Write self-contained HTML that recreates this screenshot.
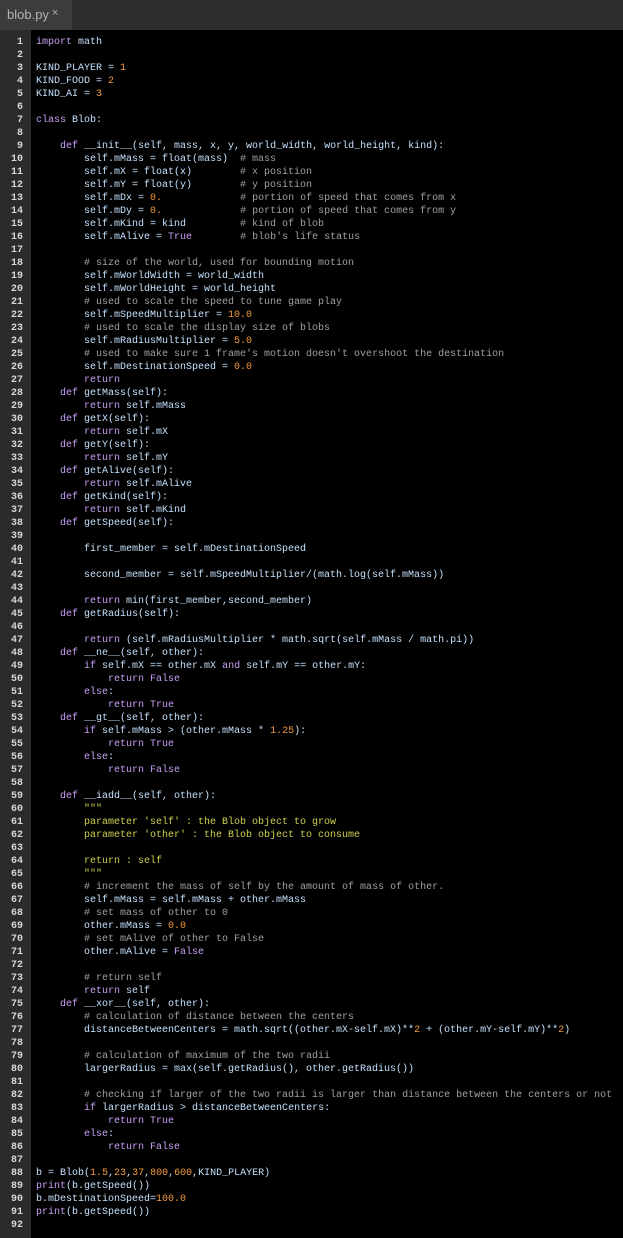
<!DOCTYPE html>
<html><head><meta charset="utf-8"><style>
html,body{margin:0;padding:0;background:#000;width:623px;height:1238px;overflow:hidden}
.tabbar{position:absolute;left:0;top:0;width:623px;height:30px;background:#2d2d2d}
.tab{position:absolute;left:0;top:0;width:72px;height:30px;background:#3c3c3c;color:#b4b4b4;font:13px "Liberation Sans",sans-serif;line-height:30px;padding-left:7px;box-sizing:border-box}
.tab span{font-size:11px;margin-left:3px;position:relative;top:-3px}
.gutter{position:absolute;left:0;top:30px;width:31px;height:1208px;background:#2b2b2b}
pre{margin:0;font:10px/13px "Liberation Mono",monospace;position:absolute;top:36px}
.nums{left:0;width:23px;text-align:right;color:#d8d8d8;font-weight:bold}
.code{left:36px;color:#c4e0fc}
.k{color:#c8a0f4}.n{color:#f49c40}.c{color:#a0a0a0}.s{color:#d0d050}
</style></head><body>
<div class="tabbar"><div class="tab">blob.py<span>×</span></div></div>
<div class="gutter"></div>
<pre class="nums">1
2
3
4
5
6
7
8
9
10
11
12
13
14
15
16
17
18
19
20
21
22
23
24
25
26
27
28
29
30
31
32
33
34
35
36
37
38
39
40
41
42
43
44
45
46
47
48
49
50
51
52
53
54
55
56
57
58
59
60
61
62
63
64
65
66
67
68
69
70
71
72
73
74
75
76
77
78
79
80
81
82
83
84
85
86
87
88
89
90
91
92</pre>
<pre class="code"><span class="k">import</span> math

KIND_PLAYER = <span class="n">1</span>
KIND_FOOD = <span class="n">2</span>
KIND_AI = <span class="n">3</span>

<span class="k">class</span> Blob:

    <span class="k">def</span> __init__(self, mass, x, y, world_width, world_height, kind):
        self.mMass = float(mass)  <span class="c"># mass</span>
        self.mX = float(x)        <span class="c"># x position</span>
        self.mY = float(y)        <span class="c"># y position</span>
        self.mDx = <span class="n">0.</span>             <span class="c"># portion of speed that comes from x</span>
        self.mDy = <span class="n">0.</span>             <span class="c"># portion of speed that comes from y</span>
        self.mKind = kind         <span class="c"># kind of blob</span>
        self.mAlive = <span class="k">True</span>        <span class="c"># blob's life status</span>

        <span class="c"># size of the world, used for bounding motion</span>
        self.mWorldWidth = world_width
        self.mWorldHeight = world_height
        <span class="c"># used to scale the speed to tune game play</span>
        self.mSpeedMultiplier = <span class="n">10.0</span>
        <span class="c"># used to scale the display size of blobs</span>
        self.mRadiusMultiplier = <span class="n">5.0</span>
        <span class="c"># used to make sure 1 frame's motion doesn't overshoot the destination</span>
        self.mDestinationSpeed = <span class="n">0.0</span>
        <span class="k">return</span>
    <span class="k">def</span> getMass(self):
        <span class="k">return</span> self.mMass
    <span class="k">def</span> getX(self):
        <span class="k">return</span> self.mX
    <span class="k">def</span> getY(self):
        <span class="k">return</span> self.mY
    <span class="k">def</span> getAlive(self):
        <span class="k">return</span> self.mAlive
    <span class="k">def</span> getKind(self):
        <span class="k">return</span> self.mKind
    <span class="k">def</span> getSpeed(self):

        first_member = self.mDestinationSpeed

        second_member = self.mSpeedMultiplier/(math.log(self.mMass))

        <span class="k">return</span> min(first_member,second_member)
    <span class="k">def</span> getRadius(self):

        <span class="k">return</span> (self.mRadiusMultiplier * math.sqrt(self.mMass / math.pi))
    <span class="k">def</span> __ne__(self, other):
        <span class="k">if</span> self.mX == other.mX <span class="k">and</span> self.mY == other.mY:
            <span class="k">return</span> <span class="k">False</span>
        <span class="k">else</span>:
            <span class="k">return</span> <span class="k">True</span>
    <span class="k">def</span> __gt__(self, other):
        <span class="k">if</span> self.mMass &gt; (other.mMass * <span class="n">1.25</span>):
            <span class="k">return</span> <span class="k">True</span>
        <span class="k">else</span>:
            <span class="k">return</span> <span class="k">False</span>

    <span class="k">def</span> __iadd__(self, other):
<span class="s">        """
        parameter 'self' : the Blob object to grow
        parameter 'other' : the Blob object to consume

        return : self
        """</span>
        <span class="c"># increment the mass of self by the amount of mass of other.</span>
        self.mMass = self.mMass + other.mMass
        <span class="c"># set mass of other to 0</span>
        other.mMass = <span class="n">0.0</span>
        <span class="c"># set mAlive of other to False</span>
        other.mAlive = <span class="k">False</span>

        <span class="c"># return self</span>
        <span class="k">return</span> self
    <span class="k">def</span> __xor__(self, other):
        <span class="c"># calculation of distance between the centers</span>
        distanceBetweenCenters = math.sqrt((other.mX-self.mX)**<span class="n">2</span> + (other.mY-self.mY)**<span class="n">2</span>)

        <span class="c"># calculation of maximum of the two radii</span>
        largerRadius = max(self.getRadius(), other.getRadius())

        <span class="c"># checking if larger of the two radii is larger than distance between the centers or not</span>
        <span class="k">if</span> largerRadius &gt; distanceBetweenCenters:
            <span class="k">return</span> <span class="k">True</span>
        <span class="k">else</span>:
            <span class="k">return</span> <span class="k">False</span>

b = Blob(<span class="n">1.5</span>,<span class="n">23</span>,<span class="n">37</span>,<span class="n">800</span>,<span class="n">600</span>,KIND_PLAYER)
<span class="k">print</span>(b.getSpeed())
b.mDestinationSpeed=<span class="n">100.0</span>
<span class="k">print</span>(b.getSpeed())
</pre>
</body></html>
